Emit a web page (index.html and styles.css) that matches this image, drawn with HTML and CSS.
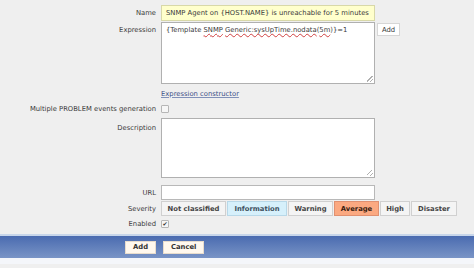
FILE: index.html
```html
<!DOCTYPE html>
<html>
<head>
<meta charset="utf-8">
<link rel="stylesheet" href="styles.css">
</head>
<body>
<div class="form">
  <div class="label r-name">Name</div>
  <div class="field r-name"><div class="input name">SNMP Agent on {HOST.NAME} is unreachable for 5 minutes</div></div>

  <div class="label r-expr">Expression</div>
  <div class="field r-expr expr-row">
    <div class="textarea expr">{Template <span class="sp">SNMP</span> <span class="sp">Generic:sysUpTime.nodata</span>(<span class="sp">5m</span>)}=1<span class="grip"></span></div>
    <div class="btn small">Add</div>
  </div>

  <div class="label r-link"></div>
  <div class="field r-link"><a class="link">Expression constructor</a></div>

  <div class="label r-multi">Multiple PROBLEM events generation</div>
  <div class="field r-multi"><span class="cb"></span></div>

  <div class="label r-desc">Description</div>
  <div class="field r-desc"><div class="textarea desc"><span class="grip"></span></div></div>

  <div class="label r-url">URL</div>
  <div class="field r-url"><div class="input url"></div></div>

  <div class="label r-sev">Severity</div>
  <div class="field r-sev">
    <div class="sev">
      <span class="s nc">Not classified</span>
      <span class="s info">Information</span>
      <span class="s warn">Warning</span>
      <span class="s avg">Average</span>
      <span class="s high">High</span>
      <span class="s dis">Disaster</span>
    </div>
  </div>

  <div class="label r-en">Enabled</div>
  <div class="field r-en"><span class="cb checked">&#10004;</span></div>
</div>
<div class="footer">
  <div class="fbtn add">Add</div>
  <div class="fbtn">Cancel</div>
</div>
<div class="after"></div>
</body>
</html>
```
FILE: styles.css
```css
html, body { margin: 0; padding: 0; }
body {
  width: 474px;
  height: 268px;
  background: #efefef;
  font-family: "DejaVu Sans", Verdana, sans-serif;
  font-size: 6.8px;
  color: #3a3a3a;
  overflow: hidden;
}
.form {
  display: grid;
  grid-template-columns: 156px 1fr;
  grid-auto-rows: min-content;
  column-gap: 5px;
  padding-top: 5px;
  height: 234px;
  box-sizing: border-box;
}
.label {
  text-align: right;
  display: flex;
  justify-content: flex-end;
  align-items: center;
  color: #3a3a3a;
  white-space: nowrap;
}
.field { display: flex; align-items: center; }

.r-name { height: 16px; }
.input {
  box-sizing: border-box;
  height: 16px;
  width: 214px;
  border: 1px solid #b8b8b8;
  background: #fff;
  padding: 0 4px;
  display: flex;
  align-items: center;
  white-space: nowrap;
}
.input.name { background: #ffffcc; border-color: #d8d8a8; }

.r-expr { margin-top: 1px; }
.label.r-expr { align-items: flex-start; padding-top: 4px; }
.expr-row { align-items: flex-start; gap: 2px; }
.textarea {
  position: relative;
  box-sizing: border-box;
  width: 214px;
  background: #fff;
  border: 1px solid #b0b0b0;
  padding: 3px 4px;
  white-space: nowrap;
}
.textarea.expr { height: 62px; }
.sp { text-decoration: underline wavy #d04040; text-decoration-thickness: 0.5px; text-underline-offset: 1px; }
.grip {
  position: absolute;
  right: 1px; bottom: 1px;
  width: 6px; height: 6px;
  background: linear-gradient(135deg, transparent 40%, #b0b0b0 40%, #b0b0b0 50%, transparent 50%, transparent 70%, #b0b0b0 70%, #b0b0b0 80%, transparent 80%);
}
.btn.small {
  box-sizing: border-box;
  height: 13px;
  padding: 0 4px;
  border: 1px solid #d6d6d6;
  background: #fff;
  display: flex; align-items: center;
  margin-top: 1px;
}

.r-link { height: 15px; margin-top: 2px; }
.link { color: #3a4e86; text-decoration: underline; text-decoration-color: #8090b8; }

.r-multi { height: 14px; margin-top: 1px; }
.cb {
  box-sizing: border-box;
  width: 8px; height: 8px;
  border: 1px solid #b6b6b6;
  background: #f6f6f6;
  border-radius: 1px;
  display: inline-flex; align-items: center; justify-content: center;
  font-size: 6px; line-height: 1;
  color: #333;
}

.r-desc { margin-top: 2px; }
.label.r-desc { align-items: flex-start; padding-top: 6px; }
.textarea.desc { height: 60px; }

.r-url { height: 15px; margin-top: 7px; }
.input.url { height: 15px; }

.r-sev { height: 15px; margin-top: 1px; }
.sev { display: flex; height: 15px; gap: 1px; }
.s {
  box-sizing: border-box;
  height: 15px;
  border: 1px solid #d0d0d0;
  background: #f4f4f4;
  font-weight: bold;
  color: #444;
  display: flex; align-items: center; justify-content: center;
}
.nc { width: 65px; }
.info { width: 60px; background: #d6f0fb; border-color: #b8d8e8; color: #405060; }
.warn { width: 45px; }
.avg { width: 45px; background: #fba981; border-color: #e09070; color: #3a2010; }
.high { width: 30px; }
.dis { width: 46px; }

.r-en { height: 14px; margin-top: 1px; }

.footer {
  box-sizing: border-box;
  height: 24px;
  border-top: 2px solid #c8d6ea;
  background: linear-gradient(#4a6bb0, #7994c6);
  display: flex;
  align-items: center;
  gap: 7px;
  padding-left: 125px;
}
.fbtn {
  box-sizing: border-box;
  height: 13px;
  padding: 0 7px;
  background: #fff8ee;
  border: 1px solid #e8dccc;
  font-weight: bold;
  color: #333;
  display: flex; align-items: center;
}
.fbtn.add { width: 31px; justify-content: center; padding: 0; }
.after { height: 6px; background: #f4f6fa; }
```
